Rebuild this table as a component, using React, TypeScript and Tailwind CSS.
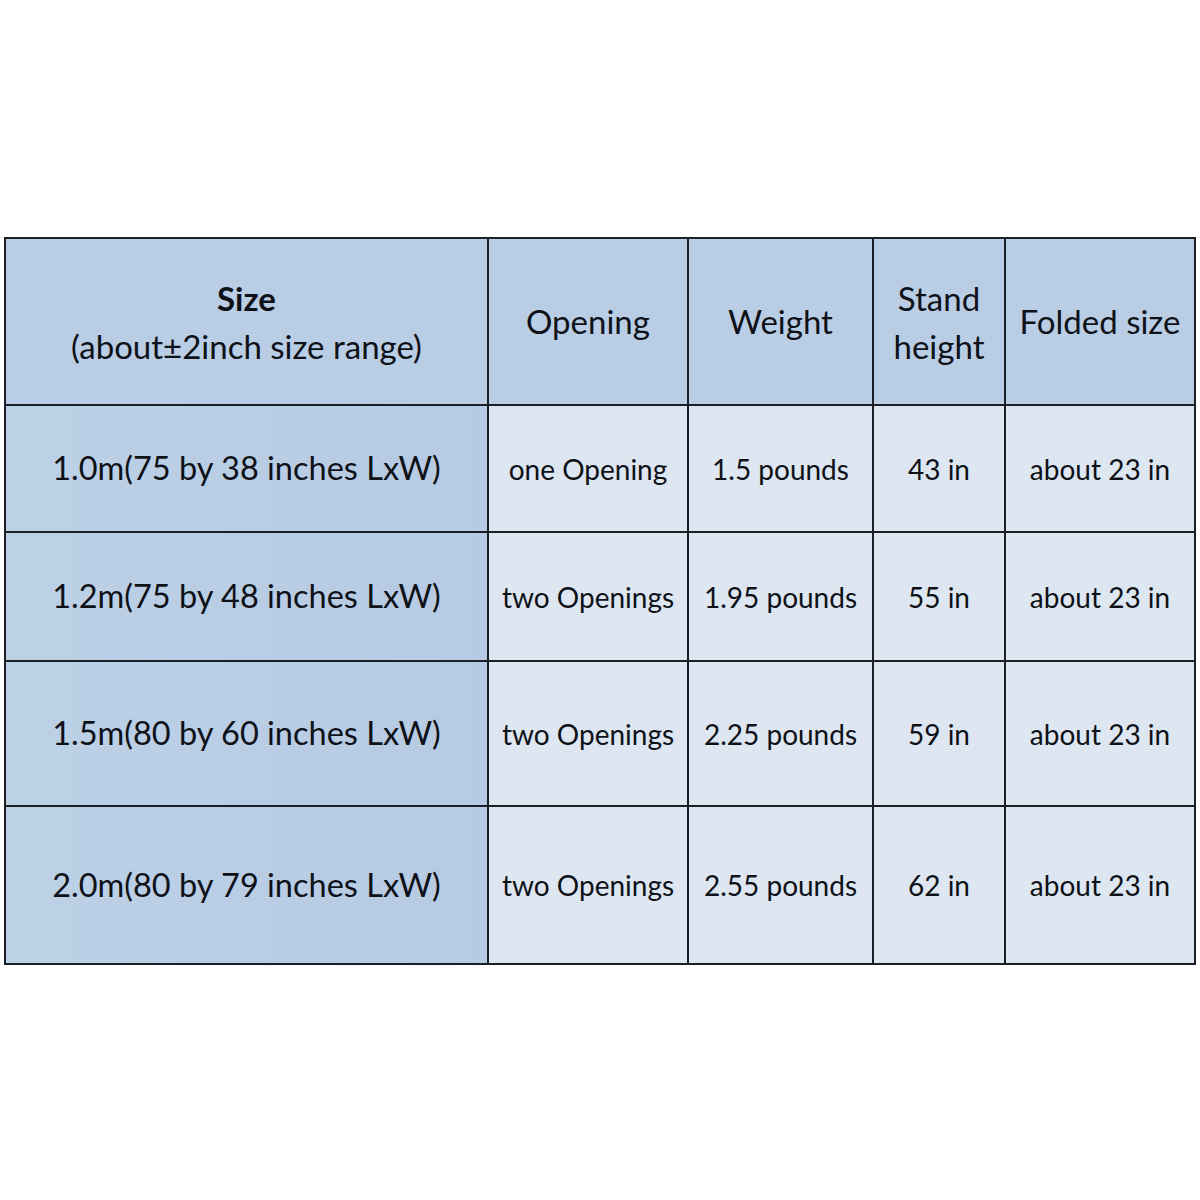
import React from "react"

const rows = [
  { size: "1.0m(75 by 38 inches LxW)", opening: "one Opening", weight: "1.5 pounds", stand: "43 in", folded: "about 23 in" },
  { size: "1.2m(75 by 48 inches LxW)", opening: "two Openings", weight: "1.95 pounds", stand: "55 in", folded: "about 23 in" },
  { size: "1.5m(80 by 60 inches LxW)", opening: "two Openings", weight: "2.25 pounds", stand: "59 in", folded: "about 23 in" },
  { size: "2.0m(80 by 79 inches LxW)", opening: "two Openings", weight: "2.55 pounds", stand: "62 in", folded: "about 23 in" },
]

const rowHeights = ["h-[125px]", "h-[127px]", "h-[143px]", "h-[156px]"]

export default function App() {
  return (
    <div className="w-[1200px] h-[1200px] bg-white pt-[237px] pl-[4px] font-['Lato','Open_Sans',sans-serif] text-[#0e1218]">
      <div className="w-[1192px] bg-[#1b1e24] p-[2px] grid grid-cols-[481px_198px_183px_130px_188px] gap-[2px]">
        {/* header */}
        <div className="h-[165px] bg-[#b9cde4] flex flex-col items-center justify-center text-[33px] leading-[48px]">
          <span className="font-bold text-[33px]">Size</span>
          <span>(about±2inch size range)</span>
        </div>
        <div className="bg-[#b9cde4] flex items-center justify-center text-[33px]">Opening</div>
        <div className="bg-[#b9cde4] flex items-center justify-center text-[33px]">Weight</div>
        <div className="bg-[#b9cde4] flex flex-col items-center justify-center text-[33px] leading-[48px]">
          <span>Stand</span>
          <span>height</span>
        </div>
        <div className="bg-[#b9cde4] flex items-center justify-center text-[33px] whitespace-nowrap">Folded size</div>

        {rows.map((r, i) => (
          <React.Fragment key={r.size}>
            <div className={`${rowHeights[i]} bg-gradient-to-r from-[#bcd0e6] to-[#b6cae3] flex items-center justify-center text-[32.5px] whitespace-nowrap`}>
              {r.size}
            </div>
            <div className="bg-[#dde6f1] flex items-center justify-center text-[28px] whitespace-nowrap">{r.opening}</div>
            <div className="bg-[#dde6f1] flex items-center justify-center text-[28px] whitespace-nowrap">{r.weight}</div>
            <div className="bg-[#dde6f1] flex items-center justify-center text-[28px] whitespace-nowrap">{r.stand}</div>
            <div className="bg-[#dde6f1] flex items-center justify-center text-[28px] whitespace-nowrap">{r.folded}</div>
          </React.Fragment>
        ))}
      </div>
    </div>
  )
}
